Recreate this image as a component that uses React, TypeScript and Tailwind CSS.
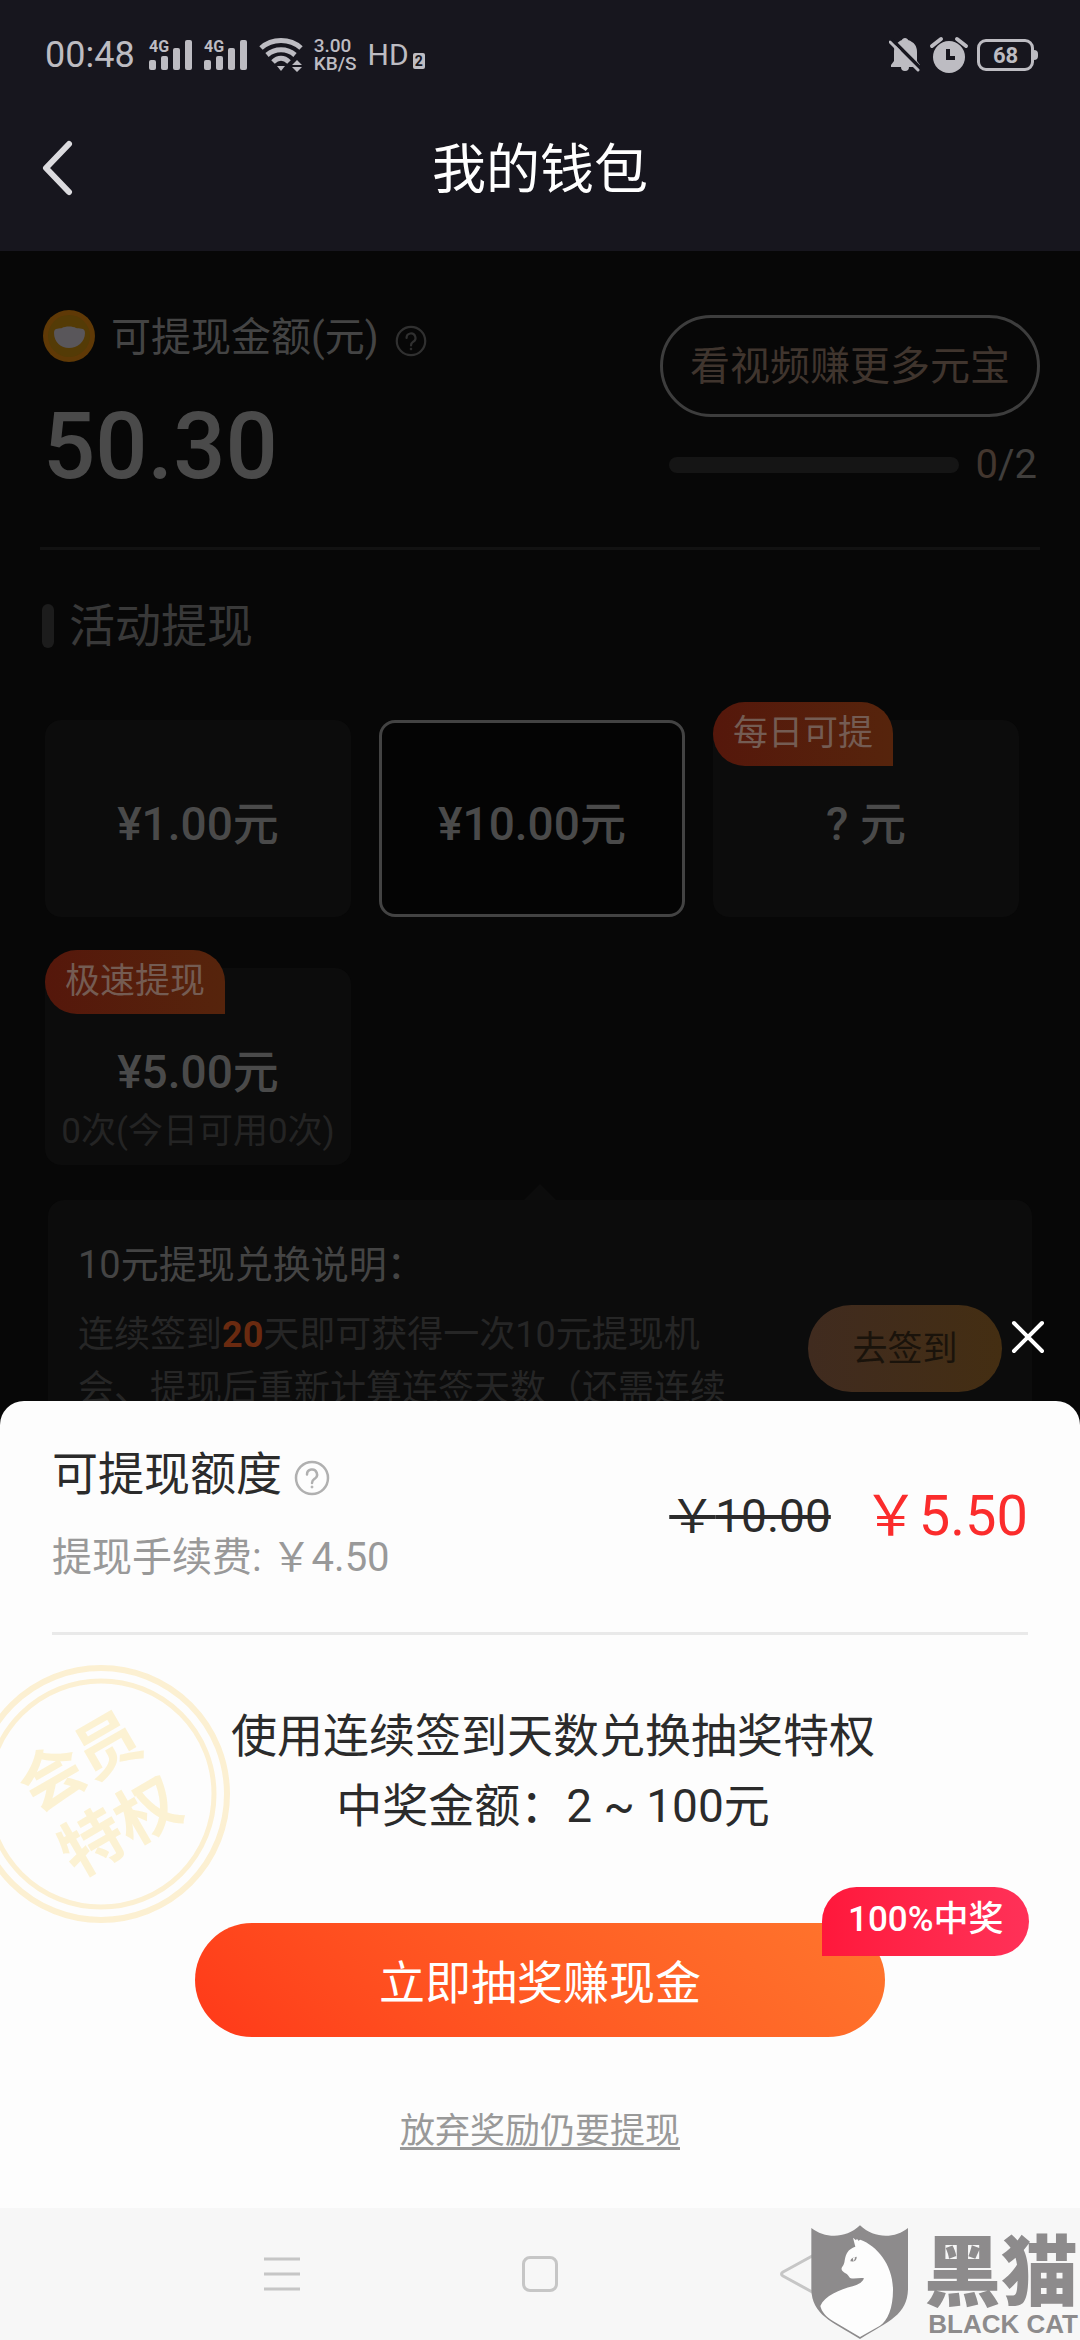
import type { ReactNode } from 'react';

const YUAN = '\uFFE5';
const COLON = '\uFF1A';

function Signal() {
  return (
    <svg className="h-8 w-11 overflow-visible" viewBox="0 0 44 32" fill="currentColor" aria-hidden="true">
      <text x="0" y="13" fontSize="16" fontWeight="700" fontFamily="Roboto, sans-serif">4G</text>
      <rect x="0" y="21" width="7" height="10" rx="2" />
      <rect x="12" y="17" width="7" height="14" rx="2" />
      <rect x="24" y="9" width="7" height="22" rx="2" />
      <rect x="36" y="1" width="7" height="30" rx="2" />
    </svg>
  );
}

function Wifi() {
  return (
    <svg className="h-9 w-11" viewBox="0 0 44 36" fill="none" stroke="currentColor" aria-hidden="true">
      <path d="M2 11C13 1 31 1 42 11" strokeWidth="5" />
      <path d="M8 18C16 11 28 11 36 18" strokeWidth="5" />
      <path d="M14 25C19 20 25 20 30 25" strokeWidth="5" />
      <path d="M18 29h8l-4 5z" fill="currentColor" stroke="none" />
      <path d="M33 28l5-5 5 5zM33 30h10l-5 5z" fill="currentColor" stroke="none" />
    </svg>
  );
}

function BellOff() {
  return (
    <svg className="h-9 w-8" viewBox="0 0 32 36" aria-hidden="true">
      <path d="M16 1c1.500 0 3 1 3 2 6 2 9 6 9 12v9l3 4v2H20a4 4 0 0 1-8 0H2v-2l3-4V15C5 9 8 5 13 3c0-1 1.500-2 3-2z" fill="currentColor" />
      <path d="M3 3L33 33" stroke="#17161e" strokeWidth="4" />
      <path d="M1 5L29 33" stroke="currentColor" strokeWidth="3" strokeLinecap="round" />
      <path d="M0 9L5 13V9L8 8L0 0z" fill="#17161e" />
      <path d="M1 5L10 14" stroke="currentColor" strokeWidth="3" strokeLinecap="round" />
    </svg>
  );
}

function Alarm() {
  return (
    <svg className="h-10 w-10" viewBox="0 0 40 40" fill="none" aria-hidden="true">
      <circle cx="20" cy="22" r="16" fill="currentColor" />
      <path d="M3 11L12 4M37 11L28 4" stroke="currentColor" strokeWidth="4" strokeLinecap="round" />
      <path d="M19 14V23H26" stroke="#17161e" strokeWidth="4" />
    </svg>
  );
}

function Help({ className }: { className: string }) {
  return (
    <svg className={className} viewBox="0 0 36 36" fill="none" stroke="currentColor" strokeWidth="2.500" aria-hidden="true">
      <circle cx="18" cy="18" r="16" />
      <path d="M13 14.500a5 5 0 1 1 7.500 4.300C18.800 20 18 20.800 18 23" strokeLinecap="round" />
      <circle cx="18" cy="27" r="1" fill="currentColor" strokeWidth="1" />
    </svg>
  );
}

function Coin() {
  return (
    <svg className="h-[53px] w-[53px]" viewBox="0 0 53 53" aria-hidden="true">
      <circle cx="26" cy="26" r="26" fill="#5f3906" />
      <circle cx="26" cy="26" r="21" fill="#543b06" />
      <path d="M11 23c0-6 6-4 8-5 3-2 11-2 14 0 3 1 9-1 9 5 0 9-8 15-16 15s-15-6-15-15z" fill="#59565a" />
    </svg>
  );
}

function Stamp() {
  return (
    <svg className="absolute top-[264px] -left-7 h-[258px] w-[258px]" viewBox="0 0 258 258" fill="none" aria-hidden="true">
      <g stroke="#fcf0d2">
        <circle cx="129" cy="129" r="126" strokeWidth="6" />
        <circle cx="129" cy="129" r="113" strokeWidth="5" />
      </g>
      <g
        transform="rotate(-30 129 129)"
        fill="#fcf2d3"
        fontSize="64"
        fontWeight="700"
        textAnchor="middle"
        fontFamily="'Noto Sans CJK SC', sans-serif"
      >
        <text x="127" y="113">会员</text>
        <text x="129" y="190">特权</text>
      </g>
    </svg>
  );
}

function BlackCat() {
  return (
    <div className="absolute right-0 bottom-0 flex items-end text-[#8d8b8c]">
      <svg className="h-[115px] w-[98px]" viewBox="63 75 294 345" aria-hidden="true">
        <path d="M64 84C104 115 166 118 210 76C254 118 316 115 354 84V268C352 345 296 364 210 417C124 364 66 345 64 268Z" fill="currentColor" />
        <path d="M189 113L198 121L201 116L205 122L211 119C262 138 309 195 309 270C309 325 293 362 270 377L210 411L130 364C107 350 95 335 91 318C104 288 150 268 188 259C208 253 218 246 222 235C207 232 193 239 180 234C175 228 174 223 165 219C157 215 152 208 156 202C164 193 163 184 166 172C171 154 179 146 196 140Z" fill="#fdfdfd" />
        <path d="M181 184C182 176 188 171 200 170C200 180 195 186 181 184Z" fill="currentColor" />
        <path d="M188 173L196 171L191 185Z" fill="#fdfdfd" />
      </svg>
      <div className="flex w-[171px] flex-col items-end pr-0.5 pb-0.5">
        <span className="font-['Noto_Sans_CJK_SC',sans-serif] text-[77px] leading-[86px] font-black">黑猫</span>
        <span className="font-['Liberation_Sans',sans-serif] text-[26px] leading-7 font-bold whitespace-nowrap">BLACK CAT</span>
      </div>
    </div>
  );
}

function Amount({ children, note, badge, selected }: { children: ReactNode; note?: string; badge?: string; selected?: boolean }) {
  return (
    <button
      type="button"
      className={
        selected
          ? 'relative flex h-[197px] flex-col items-center rounded-2xl border-[3px] border-[#434343] bg-[#040404] pt-[75px]'
          : 'relative flex h-[197px] flex-col items-center rounded-2xl bg-[#0c0c0c] pt-[78px]'
      }
    >
      {badge && (
        <span className="absolute -top-[18px] left-0 rounded-[32px] rounded-br-none bg-linear-to-r from-[#55170b] to-[#56240c] px-5 py-2 text-[35px] leading-[48px] whitespace-nowrap text-[#745c53]">
          {badge}
        </span>
      )}
      <span className="text-[46px] leading-[52px] font-medium whitespace-pre text-[#4a4a4a]">{children}</span>
      {note && <span className="mt-3 text-[35px] leading-[44px] whitespace-nowrap text-[#242424]">{note}</span>}
    </button>
  );
}

export default function App() {
  return (
    <div className="relative flex h-screen flex-col overflow-hidden bg-[#070707] font-[Roboto,'Noto_Sans_CJK_SC',sans-serif]">
      <header className="shrink-0 bg-[#17161e] pb-[25px]">
        <div className="flex h-[110px] items-center justify-between pr-[42px] pl-[45px] text-[#bdbcc2]">
          <div className="flex items-center gap-[11px]">
            <span className="mr-[3px] text-4xl">00:48</span>
            <Signal />
            <Signal />
            <Wifi />
            <span className="flex flex-col text-[19px] leading-[18px] font-medium">
              <span>3.00</span>
              <span>KB/S</span>
            </span>
            <span className="flex items-end gap-1 text-3xl leading-9">
              HD
              <span className="mb-1 rounded-xs bg-[#bdbcc2] px-0.5 text-sm leading-4 font-bold text-[#17161e]">2</span>
            </span>
          </div>
          <div className="flex items-center gap-2">
            <BellOff />
            <Alarm />
            <span className="flex items-center">
              <span className="flex h-8 w-[57px] items-center justify-center rounded-[9px] border-[3px] border-current text-[22px] font-bold">68</span>
              <span className="h-2.5 w-1 rounded-r-full bg-current" />
            </span>
          </div>
        </div>
        <div className="grid h-[116px] grid-cols-[1fr_auto_1fr] items-center px-10">
          <button type="button" aria-label="返回" className="w-9 text-[#dcdbdf]">
            <svg className="h-14 w-9" viewBox="0 0 36 56" fill="none" stroke="currentColor" strokeWidth="6" strokeLinecap="round" strokeLinejoin="round">
              <path d="M29 4L6 28L29 52" />
            </svg>
          </button>
          <h1 className="pt-1.5 text-[54px] leading-[72px] text-white">我的钱包</h1>
        </div>
      </header>

      <main className="min-h-0 flex-1 overflow-hidden pt-[59px]">
        <section className="mx-10 flex justify-between border-b-[3px] border-[#121212] pb-[50px]">
          <div className="pl-[3px]">
            <div className="flex h-[52px] items-center text-[#444]">
              <Coin />
              <h2 className="ml-[15px] pt-1 text-[40px] leading-[52px]">可提现金额(元)</h2>
              <Help className="mt-2.5 ml-4 h-8 w-8 text-[#303030]" />
            </div>
            <p className="mt-[35px] text-[92px] leading-[100px] font-medium text-[#4a4a4a]">50.30</p>
          </div>
          <div className="flex w-[380px] flex-col pt-[5px]">
            <button type="button" className="h-[102px] rounded-full border-[3px] border-[#3d3d3d] pt-0.5 text-[40px] text-[#40352e]">
              看视频赚更多元宝
            </button>
            <div className="mt-7 flex h-10 items-center justify-between pr-[3px] pl-[9px]">
              <span className="h-4 w-[290px] rounded-full bg-[#151515]" />
              <span className="text-[40px] leading-10 text-[#403e3c]">
                <span className="text-[#43362e]">0</span>/2
              </span>
            </div>
          </div>
        </section>

        <h2 className="mx-[42px] mt-[52px] flex items-center gap-[15px] text-[46px] leading-[48px] text-[#393939]">
          <span className="h-11 w-3 rounded-full bg-[#1c1c1c]" />
          活动提现
        </h2>

        <div className="mt-[70px] mr-[61px] ml-[45px] grid grid-cols-3 gap-x-7 gap-y-[51px]">
          <Amount>¥1.00元</Amount>
          <Amount selected>¥10.00元</Amount>
          <Amount badge="每日可提">? 元</Amount>
          <Amount badge="极速提现" note="0次(今日可用0次)">¥5.00元</Amount>
        </div>

        <section className="relative mx-12 mt-[35px] rounded-2xl bg-[#0c0c0c] px-[30px] pt-[43px] pb-10">
          <svg className="absolute -top-4 left-1/2 h-4 w-8 -translate-x-1/2 text-[#0c0c0c]" viewBox="0 0 32 16" fill="currentColor" aria-hidden="true">
            <path d="M16 0L32 16H0Z" />
          </svg>
          <h3 className="text-[38px] leading-[44px] text-[#444]">10元提现兑换说明{COLON}</h3>
          <div className="mt-[18px] flex items-start justify-between">
            <p className="w-[654px] pt-[3px] text-4xl leading-[54px] text-[#262626]">
              连续签到<strong className="text-[#6a2a10]">20</strong>天即可获得一次10元提现机会、提现后重新计算连签天数（还需连续
            </p>
            <button type="button" className="h-[87px] w-[194px] rounded-full bg-linear-to-r from-[#402b1f] to-[#442e12] pt-1 text-[35px] text-[#1a130b]">
              去签到
            </button>
          </div>
        </section>
      </main>

      <section role="dialog" aria-label="可提现额度" className="relative shrink-0 rounded-t-3xl bg-[#fdfdfd] px-[52px] pt-[45px] pb-[52px] text-[#2b2b2b]">
        <button type="button" aria-label="关闭" className="absolute -top-[82px] right-[34px] text-white">
          <svg className="h-9 w-9" viewBox="0 0 36 36" fill="none" stroke="currentColor" strokeWidth="4" strokeLinecap="round">
            <path d="M4 4L32 32M32 4L4 32" />
          </svg>
        </button>
        <Stamp />
        <div className="flex items-center justify-between border-b-[3px] border-[#e9e9e9] pb-[50px]">
          <div>
            <div className="flex items-center gap-3">
              <h2 className="text-[46px] leading-[56px]">可提现额度</h2>
              <Help className="mt-2 h-9 w-9 text-[#b0b0b0]" />
            </div>
            <p className="mt-8 text-[40px] leading-[48px] text-[#999]">提现手续费: {YUAN}4.50</p>
          </div>
          <div className="flex items-center gap-8 pt-1">
            <s className="text-[46px] leading-[56px]">{YUAN}10.00</s>
            <strong className="text-[56px] leading-[64px] font-normal text-[#fb2c2c]">{YUAN}5.50</strong>
          </div>
        </div>
        <p className="mt-[66px] pl-[26px] text-center text-[46px] leading-[70px]">
          使用连续签到天数兑换抽奖特权
          <br />
          中奖金额{COLON}2 ~ 100元
        </p>
        <div className="relative mx-auto mt-[82px] w-[690px]">
          <button type="button" className="h-[114px] w-full rounded-full bg-linear-45 from-[#ff3819] to-[#ff762d] pt-1.5 text-[46px] text-white">
            立即抽奖赚现金
          </button>
          <span className="absolute -top-9 left-[627px] rounded-[35px] rounded-bl-none bg-linear-to-r from-[#ff173b] to-[#ff3158] px-[26px] pt-[9px] pb-3 text-[35px] leading-[48px] font-medium whitespace-nowrap text-white">
            100%中奖
          </span>
        </div>
        <a href="#withdraw" className="mx-auto mt-[71px] block w-fit text-[35px] leading-[48px] text-[#999] underline underline-offset-4">
          放弃奖励仍要提现
        </a>
      </section>

      <nav className="relative flex h-[132px] shrink-0 items-center justify-center gap-[222px] bg-[#f7f7f7] text-[#c6c6c6]">
        <button type="button" aria-label="菜单">
          <svg className="h-9 w-9" viewBox="0 0 36 36" stroke="currentColor" strokeWidth="3">
            <path d="M0 3H36M0 18H36M0 33H36" />
          </svg>
        </button>
        <button type="button" aria-label="主页" className="h-9 w-9 rounded-lg border-[3px] border-current" />
        <button type="button" aria-label="后退">
          <svg className="h-11 w-9" viewBox="0 0 36 44" fill="none" stroke="currentColor" strokeWidth="3" strokeLinejoin="round">
            <path d="M34 3V41L3 24Q0 22 3 20Z" />
          </svg>
        </button>
        <BlackCat />
      </nav>
    </div>
  );
}
